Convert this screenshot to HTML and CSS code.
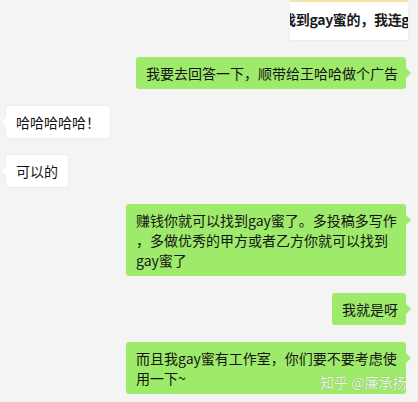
FILE: index.html
```html
<!DOCTYPE html>
<html lang="zh-CN">
<head>
    <meta charset="UTF-8">
    <meta name="viewport" content="width=device-width, initial-scale=1.0">
    <title>聊天记录</title>
    <link rel="stylesheet" href="styles.css">
</head>
<body>

    <div class="chat">
        <!-- Quoted picture (cut off at the top) -->
        <div class="row right card-row">
            <div class="card">
                <p class="card-text">找到gay蜜的，我连gay</p>
            </div>
        </div>

        <div class="row right">
            <div class="bubble me">我要去回答一下，顺带给王哈哈做个广告</div>
        </div>

        <div class="row left">
            <div class="bubble other">哈哈哈哈哈！</div>
        </div>

        <div class="row left">
            <div class="bubble other">可以的</div>
        </div>

        <div class="row right">
            <div class="bubble me wide">赚钱你就可以找到gay蜜了。多投稿多写作<br>，多做优秀的甲方或者乙方你就可以找到<br>gay蜜了</div>
        </div>

        <div class="row right">
            <div class="bubble me">我就是呀</div>
        </div>

        <div class="row right">
            <div class="bubble me wide">而且我gay蜜有工作室，你们要不要考虑使<br>用一下~</div>
        </div>
    </div>

    <!-- Watermark -->
    <div class="watermark">知乎 @廉承扬</div>

</body>
</html>
```

FILE: styles.css
```css
/* Page */
body {
    margin: 0;
    background: #f4f4f4;
    font-family: "Noto Sans CJK SC", "Noto Sans", sans-serif;
    color: #141414;
    width: 418px;
    height: 402px;
    overflow: hidden;
    position: relative;
}

/* Chat column */
.chat {
    display: flex;
    flex-direction: column;
    gap: 17px;
}

.row {
    display: flex;
}

.row.right {
    justify-content: flex-end;
    padding-right: 12px;
}

.row.left {
    justify-content: flex-start;
    padding-left: 6px;
}

/* Quoted picture card */
.row.card-row {
    padding-right: 10px;
}

.card {
    width: 118px;
    height: 40px;
    background: #fff;
    border-top: 2px solid #f3e6a6;
    box-sizing: border-box;
    overflow: hidden;
    box-shadow: 0 1px 2px rgba(0, 0, 0, 0.06);
}

.card-text {
    margin: 0;
    padding-top: 7px;
    font-size: 14px;
    font-weight: bold;
    line-height: 20px;
    white-space: nowrap;
    text-indent: -8px;
    letter-spacing: -0.3px;
    color: #1a1a1a;
}

/* Bubbles */
.bubble {
    position: relative;
    font-size: 14px;
    line-height: 20px;
    padding: 6px 8px 6px 10px;
    border-radius: 3px;
    white-space: nowrap;
}

.bubble.me {
    background: #9eea6a;
}

.bubble.other {
    background: #fff;
    padding-right: 10px;
    box-shadow: 0 0 0 1px #ececec;
}

.bubble.wide {
    width: 280px;
    box-sizing: border-box;
}

/* Tails */
.bubble.me::after {
    content: "";
    position: absolute;
    right: -5px;
    top: 11px;
    border-left: 5px solid #9eea6a;
    border-top: 5px solid transparent;
    border-bottom: 5px solid transparent;
}

.bubble.other::before {
    content: "";
    position: absolute;
    left: -4px;
    top: 11px;
    border-right: 4px solid #fff;
    border-top: 5px solid transparent;
    border-bottom: 5px solid transparent;
}

/* Watermark */
.watermark {
    position: absolute;
    left: 320px;
    top: 372px;
    font-size: 14px;
    line-height: 20px;
    color: rgba(255, 255, 255, 0.88);
    text-shadow: 0 0 1px rgba(0, 0, 0, 0.3);
    white-space: nowrap;
}
```
